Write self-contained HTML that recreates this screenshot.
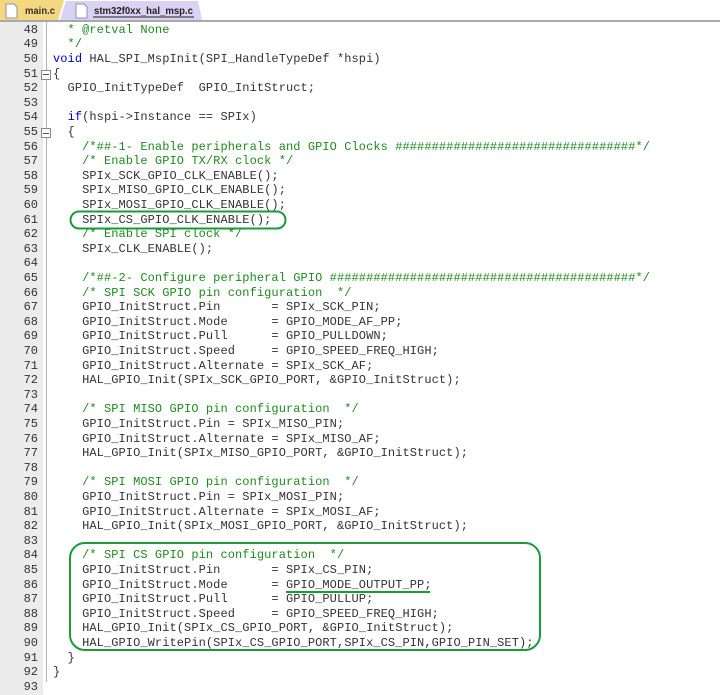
<!DOCTYPE html>
<html><head><meta charset="utf-8"><style>
body{margin:0;width:720px;height:695px;background:#fff;overflow:hidden;position:relative;font-family:"Liberation Mono",monospace}
.tabs{position:absolute;left:0;top:0;width:720px;height:20px;background:#fff;border-bottom:2px solid #a8a8a8}
.gut{position:absolute;left:0;top:22px;width:43px;height:673px;background:#ececec}
.fl{position:absolute;left:46px;top:22px;width:1px;height:660px;background:#b0b0b0}
.ln{position:absolute;left:0;width:38px;text-align:right;font-size:12px;color:#333;height:14.6px;line-height:14.6px}
.cd{position:absolute;left:53px;font-size:12px;letter-spacing:0.08px;color:#333;white-space:pre;height:14.6px;line-height:14.6px}
.c{color:#1e8a1e}.k{color:#0000c8}
.box{position:absolute;left:41px;width:8px;height:8px;border:1px solid #888;background:#fff}
.box:after{content:"";position:absolute;left:1px;top:3.5px;width:6px;height:1px;background:#555}
</style></head><body>
<div class="tabs">
<svg width="220" height="20" style="position:absolute;left:0;top:0">
<path d="M0 0 H64 L58 20 H0Z" fill="#f4d77e"/>
<path d="M66 1 H198 L202 20 H60 Z" fill="#d9d2f2"/>
<path d="M6 4 h8 l3 3 v11 h-11z" fill="#fff" stroke="#8a94b0"/>
<path d="M76 4 h8 l3 3 v11 h-11z" fill="#fff" stroke="#8a94b0"/>
<line x1="93" y1="17" x2="194" y2="17" stroke="#222"/>
<text x="25" y="14" font-family="Liberation Sans,sans-serif" font-size="10.5" font-weight="bold" fill="#333" textLength="30" lengthAdjust="spacingAndGlyphs">main.c</text>
<text x="94" y="14" font-family="Liberation Sans,sans-serif" font-size="10.5" font-weight="bold" fill="#222" textLength="99" lengthAdjust="spacingAndGlyphs">stm32f0xx_hal_msp.c</text>
</svg>
</div>
<div class="gut"></div>
<div class="fl"></div>
<div id="code"></div>
<script>
var L=[
[48,'<span class="c">  * @retval None</span>'],
[49,'<span class="c">  */</span>'],
[50,'<span class="k">void</span> HAL_SPI_MspInit(SPI_HandleTypeDef *hspi)'],
[51,'{'],
[52,'  GPIO_InitTypeDef  GPIO_InitStruct;'],
[53,''],
[54,'  <span class="k">if</span>(hspi-&gt;Instance == SPIx)'],
[55,'  {'],
[56,'<span class="c">    /*##-1- Enable peripherals and GPIO Clocks #################################*/</span>'],
[57,'<span class="c">    /* Enable GPIO TX/RX clock */</span>'],
[58,'    SPIx_SCK_GPIO_CLK_ENABLE();'],
[59,'    SPIx_MISO_GPIO_CLK_ENABLE();'],
[60,'    SPIx_MOSI_GPIO_CLK_ENABLE();'],
[61,'    SPIx_CS_GPIO_CLK_ENABLE();'],
[62,'<span class="c">    /* Enable SPI clock */</span>'],
[63,'    SPIx_CLK_ENABLE();'],
[64,''],
[65,'<span class="c">    /*##-2- Configure peripheral GPIO ##########################################*/</span>'],
[66,'<span class="c">    /* SPI SCK GPIO pin configuration  */</span>'],
[67,'    GPIO_InitStruct.Pin       = SPIx_SCK_PIN;'],
[68,'    GPIO_InitStruct.Mode      = GPIO_MODE_AF_PP;'],
[69,'    GPIO_InitStruct.Pull      = GPIO_PULLDOWN;'],
[70,'    GPIO_InitStruct.Speed     = GPIO_SPEED_FREQ_HIGH;'],
[71,'    GPIO_InitStruct.Alternate = SPIx_SCK_AF;'],
[72,'    HAL_GPIO_Init(SPIx_SCK_GPIO_PORT, &amp;GPIO_InitStruct);'],
[73,''],
[74,'<span class="c">    /* SPI MISO GPIO pin configuration  */</span>'],
[75,'    GPIO_InitStruct.Pin = SPIx_MISO_PIN;'],
[76,'    GPIO_InitStruct.Alternate = SPIx_MISO_AF;'],
[77,'    HAL_GPIO_Init(SPIx_MISO_GPIO_PORT, &amp;GPIO_InitStruct);'],
[78,''],
[79,'<span class="c">    /* SPI MOSI GPIO pin configuration  */</span>'],
[80,'    GPIO_InitStruct.Pin = SPIx_MOSI_PIN;'],
[81,'    GPIO_InitStruct.Alternate = SPIx_MOSI_AF;'],
[82,'    HAL_GPIO_Init(SPIx_MOSI_GPIO_PORT, &amp;GPIO_InitStruct);'],
[83,''],
[84,'<span class="c">    /* SPI CS GPIO pin configuration  */</span>'],
[85,'    GPIO_InitStruct.Pin       = SPIx_CS_PIN;'],
[86,'    GPIO_InitStruct.Mode      = GPIO_MODE_OUTPUT_PP;'],
[87,'    GPIO_InitStruct.Pull      = GPIO_PULLUP;'],
[88,'    GPIO_InitStruct.Speed     = GPIO_SPEED_FREQ_HIGH;'],
[89,'    HAL_GPIO_Init(SPIx_CS_GPIO_PORT, &amp;GPIO_InitStruct);'],
[90,'    HAL_GPIO_WritePin(SPIx_CS_GPIO_PORT,SPIx_CS_PIN,GPIO_PIN_SET);'],
[91,'  }'],
[92,'}'],
[93,'']];
var h='';
L.forEach(function(l,i){var t=(22.8+i*14.6).toFixed(1);
h+='<div class="ln" style="top:'+t+'px">'+l[0]+'</div><div class="cd" style="top:'+t+'px">'+l[1]+'</div>';
if(l[0]==51||l[0]==55)h+='<div class="box" style="top:'+(+t+3)+'px"></div>';});
document.getElementById('code').innerHTML=h;
</script>
<svg width="720" height="695" style="position:absolute;left:0;top:0">
<rect x="70.5" y="211.5" width="215" height="17" rx="8.5" fill="none" stroke="#1a9a3a" stroke-width="2"/>
<rect x="70" y="543" width="470" height="107" rx="15" fill="none" stroke="#1a9a3a" stroke-width="2"/>
<line x1="286" y1="592" x2="430" y2="592" stroke="#1a9a3a" stroke-width="2"/>
</svg>
</body></html>
